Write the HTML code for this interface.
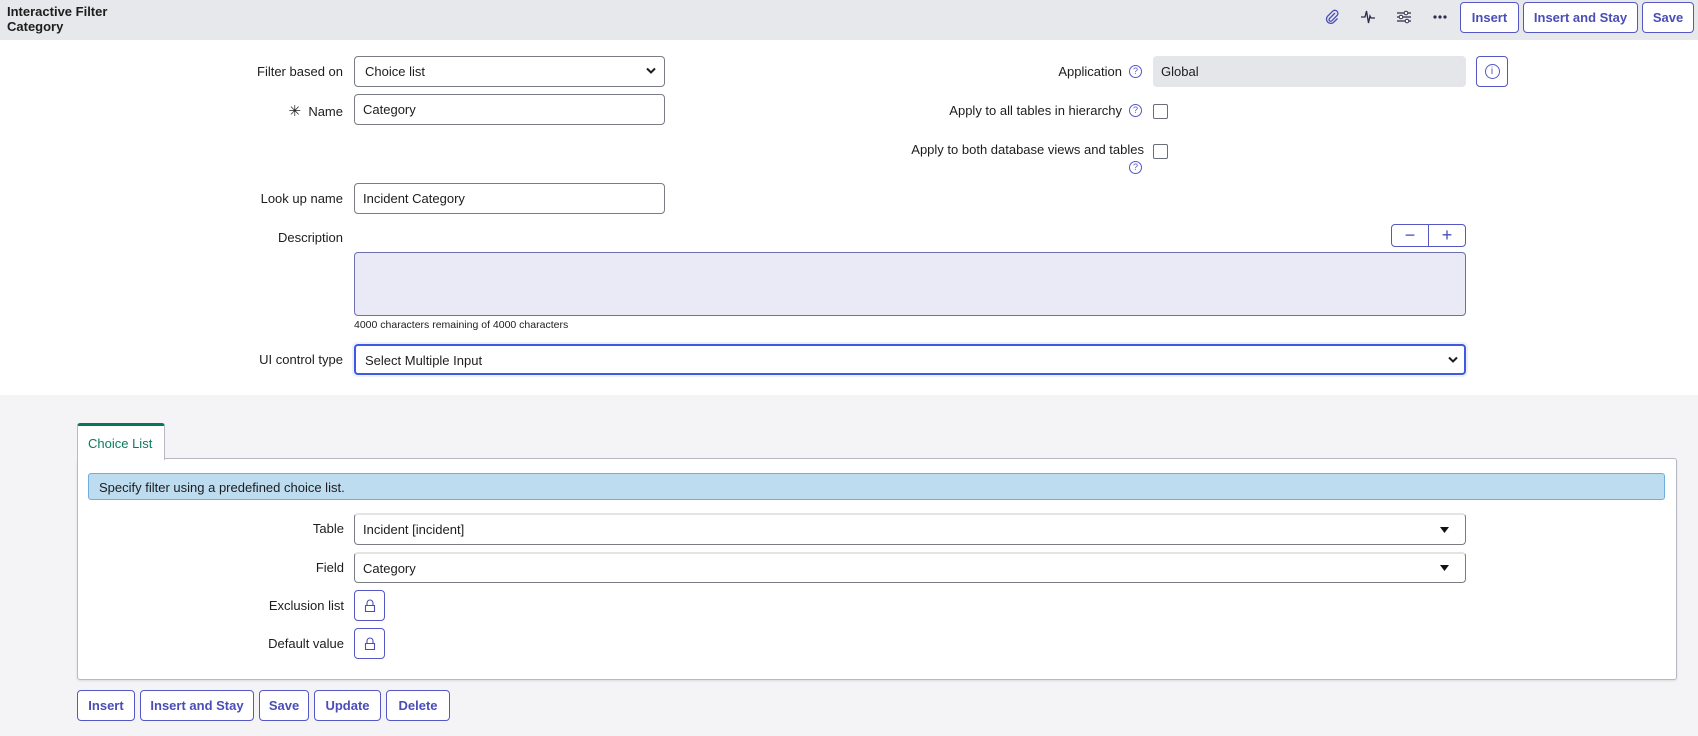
<!DOCTYPE html>
<html><head><meta charset="utf-8"><style>
*{box-sizing:border-box;margin:0;padding:0}
body{width:1698px;height:736px;overflow:hidden;background:#f4f4f6;font-family:"Liberation Sans",sans-serif;font-size:13px;color:#1d1d1d;position:relative}
.a{position:absolute}
.hdr{left:0;top:0;width:1698px;height:40px;background:#e7e8eb}
.white{left:0;top:40px;width:1698px;height:355px;background:#fff}
.btn{position:absolute;border:1px solid #5558c4;border-radius:4px;background:#fff;color:#4a4db8;font-weight:bold;font-size:13px;display:flex;align-items:center;justify-content:center}
.lbl{position:absolute;text-align:right;white-space:nowrap}
.inp{position:absolute;border:1px solid #7a7c85;border-radius:4px;background:#fff;padding-left:8px;display:flex;align-items:center}
.sel{position:absolute;border:1px solid #7a7c85;border-radius:4px;background:#fff;padding-left:8px;display:flex;align-items:center;border-top:2px solid #e4e4e4}
.help{position:absolute;width:13px;height:13px;border:1.2px solid #5558c4;border-radius:50%;color:#5558c4;font-size:9px;line-height:11px;text-align:center}
.cb{position:absolute;width:15px;height:15px;border:1px solid #6b6d78;border-radius:2px;background:#fff}
.chev{position:absolute;right:8px;top:10px}
</style></head><body>
<div class="a hdr"></div>
<div class="a" style="left:7px;top:4px;font-weight:bold;font-size:13px;line-height:15px">Interactive Filter<br>Category</div>
<svg class="a" style="left:1324px;top:9px" width="16" height="16" viewBox="0 0 16 16"><path d="M11 4 L5.5 9.5 a1.6 1.6 0 0 0 2.3 2.3 L13 6.5 a3 3 0 0 0 -4.3 -4.3 L3.3 7.6 a4.3 4.3 0 0 0 6 6 L13.5 9.5" fill="none" stroke="#4a4db8" stroke-width="1.3"/></svg>
<svg class="a" style="left:1360px;top:9px" width="16" height="16" viewBox="0 0 16 16"><path d="M1 8 H5 L6.5 2 L8.5 14 L10 7 L11 9 H15" fill="none" stroke="#2a2c4a" stroke-width="1.3"/></svg>
<svg class="a" style="left:1396px;top:9px" width="16" height="16" viewBox="0 0 16 16"><path d="M1 4H15M1 8H15M1 12H15" stroke="#2a2c4a" stroke-width="1.2"/><circle cx="10" cy="4" r="1.8" fill="#fff" stroke="#2a2c4a"/><circle cx="5" cy="8" r="1.8" fill="#fff" stroke="#2a2c4a"/><circle cx="11" cy="12" r="1.8" fill="#fff" stroke="#2a2c4a"/></svg>
<svg class="a" style="left:1432px;top:14px" width="16" height="6" viewBox="0 0 16 6"><circle cx="3" cy="3" r="1.6" fill="#2a2c4a"/><circle cx="8" cy="3" r="1.6" fill="#2a2c4a"/><circle cx="13" cy="3" r="1.6" fill="#2a2c4a"/></svg>
<div class="btn" style="left:1460px;top:2px;width:59px;height:31px">Insert</div>
<div class="btn" style="left:1523px;top:2px;width:115px;height:31px">Insert and Stay</div>
<div class="btn" style="left:1642px;top:2px;width:52px;height:31px">Save</div>
<div class="a white"></div>

<svg width="0" height="0" style="position:absolute"><defs><symbol id="cv" viewBox="0 0 10 6"><path d="M1 1L5 5L9 1" fill="none" stroke="#1d1d1d" stroke-width="2"/></symbol></defs></svg>
<div class="lbl" style="right:1355px;top:64px">Filter based on</div>
<div class="inp" style="left:354px;top:56px;width:311px;height:31px;padding-left:10px">Choice list<svg class="chev" width="10" height="7"><use href="#cv"/></svg></div>
<div class="lbl" style="right:1355px;top:102px"><span style="font-size:15px">✳</span>&nbsp; Name</div>
<div class="inp" style="left:354px;top:94px;width:311px;height:31px">Category</div>
<div class="lbl" style="right:1355px;top:191px">Look up name</div>
<div class="inp" style="left:354px;top:183px;width:311px;height:31px">Incident Category</div>
<div class="lbl" style="right:1355px;top:230px">Description</div>

<div class="lbl" style="right:576px;top:64px">Application</div>
<div class="help" style="left:1129px;top:65px">?</div>
<div class="a" style="left:1153px;top:56px;width:313px;height:31px;background:#e5e6e9;border-radius:4px;padding:8px 0 0 8px">Global</div>
<div class="btn" style="left:1476px;top:56px;width:32px;height:31px"><div style="width:15px;height:15px;border:1.2px solid #5558c4;border-radius:50%;font-size:10px;line-height:13px;text-align:center;font-weight:normal">i</div></div>
<div class="lbl" style="right:576px;top:103px">Apply to all tables in hierarchy</div>
<div class="help" style="left:1129px;top:104px">?</div>
<div class="cb" style="left:1153px;top:104px"></div>
<div class="lbl" style="right:554px;top:142px">Apply to both database views and tables</div>
<div class="help" style="left:1129px;top:161px">?</div>
<div class="cb" style="left:1153px;top:144px"></div>

<div class="btn" style="left:1391px;top:224px;width:38px;height:23px;border-radius:4px 0 0 4px;font-weight:normal;font-size:18px">−</div>
<div class="btn" style="left:1428px;top:224px;width:38px;height:23px;border-radius:0 4px 4px 0;font-weight:normal;font-size:18px">+</div>
<div class="a" style="left:354px;top:252px;width:1112px;height:64px;background:#e9eaf5;border:1px solid #6c6fa8;border-radius:4px"></div>
<div class="a" style="left:354px;top:319px;font-size:10.5px">4000 characters remaining of 4000 characters</div>
<div class="lbl" style="right:1355px;top:352px">UI control type</div>
<div class="a" style="left:352px;top:342px;width:1116px;height:35px;border-radius:5px;background:#eef0fc"></div>
<div class="a" style="left:354px;top:344px;width:1112px;height:31px;border:2px solid #3e5be0;border-radius:4px;background:#fff;padding:7px 0 0 9px">Select Multiple Input<svg class="chev" style="top:10px;right:6px" width="10" height="7"><use href="#cv"/></svg></div>

<div class="a" style="left:77px;top:458px;width:1600px;height:222px;background:#fff;border:1px solid #b8bac3;border-radius:3px;box-shadow:0 1px 2px rgba(0,0,0,.1)"></div>
<div class="a" style="left:77px;top:423px;width:88px;height:37px;background:#fff;border:1px solid #b8bac3;border-top:3px solid #047a5a;border-bottom:none;border-radius:3px 3px 0 0;color:#0a7b60;padding:10px 0 0 10px">Choice List</div>
<div class="a" style="left:88px;top:473px;width:1577px;height:27px;background:#bddcf0;border:1px solid #70ade0;border-radius:3px;padding:6px 0 0 10px">Specify filter using a predefined choice list.</div>
<div class="lbl" style="right:1354px;top:521px">Table</div>
<div class="sel" style="left:354px;top:513px;width:1112px;height:32px">Incident [incident]<svg style="position:absolute;right:16px;top:12px" width="9" height="6"><path d="M0 0H9L4.5 6Z" fill="#111"/></svg></div>
<div class="lbl" style="right:1354px;top:560px">Field</div>
<div class="sel" style="left:354px;top:552px;width:1112px;height:31px">Category<svg style="position:absolute;right:16px;top:11px" width="9" height="6"><path d="M0 0H9L4.5 6Z" fill="#111"/></svg></div>
<div class="lbl" style="right:1354px;top:598px">Exclusion list</div>
<div class="btn" style="left:354px;top:590px;width:31px;height:31px"><svg width="12" height="14" viewBox="0 0 12 14"><path d="M3 6V4a3 3 0 0 1 6 0V6M1.5 6.5H10.5V12.5H1.5Z" fill="none" stroke="#4a4db8" stroke-width="1.1"/></svg></div>
<div class="lbl" style="right:1354px;top:636px">Default value</div>
<div class="btn" style="left:354px;top:628px;width:31px;height:31px"><svg width="12" height="14" viewBox="0 0 12 14"><path d="M3 6V4a3 3 0 0 1 6 0V6M1.5 6.5H10.5V12.5H1.5Z" fill="none" stroke="#4a4db8" stroke-width="1.1"/></svg></div>

<div class="btn" style="left:77px;top:690px;width:58px;height:31px">Insert</div>
<div class="btn" style="left:140px;top:690px;width:114px;height:31px">Insert and Stay</div>
<div class="btn" style="left:259px;top:690px;width:50px;height:31px">Save</div>
<div class="btn" style="left:314px;top:690px;width:67px;height:31px">Update</div>
<div class="btn" style="left:386px;top:690px;width:64px;height:31px">Delete</div>
</body></html>
